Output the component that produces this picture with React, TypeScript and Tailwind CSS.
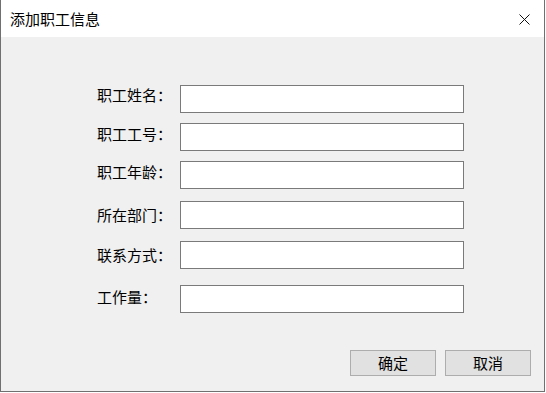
const font = { fontFamily: '"Noto Sans CJK SC", "Noto Sans", sans-serif' };

const fields = [
  { label: '职工姓名：', labelTop: 'mt-0', gap: 'mt-0' },
  { label: '职工工号：', labelTop: 'mt-[1px]', gap: 'mt-[10px]' },
  { label: '职工年龄：', labelTop: 'mt-[1px]', gap: 'mt-[10px]' },
  { label: '所在部门：', labelTop: 'mt-[4px]', gap: 'mt-[12px]' },
  { label: '联系方式：', labelTop: 'mt-[4px]', gap: 'mt-[12px]' },
  { label: '工作量：', labelTop: 'mt-[2px]', gap: 'mt-[16px]' },
];

export default function App() {
  return (
    <div className="w-[546px] h-[393px] bg-white" style={font}>
      <div className="w-[545px] h-[392px] flex flex-col border-l border-r border-b border-[#707070] bg-[#f0f0f0]">
        {/* Title bar */}
        <div className="h-[37px] bg-white flex items-center justify-between pl-[9px] pr-[14px]">
          <span className="text-[15px] leading-5 text-black">添加职工信息</span>
          <svg width="11" height="11" viewBox="0 0 11 11" className="mt-[1px]">
            <path d="M0.5 0.5 L10.5 10.5 M10.5 0.5 L0.5 10.5" stroke="#111" strokeWidth="1" />
          </svg>
        </div>

        {/* Form */}
        <div className="flex-1 flex flex-col pt-[48px] pl-[96px] pb-[15px] pr-[13px]">
          {fields.map((f, i) => (
            <div key={i} className={`flex items-start ${f.gap}`}>
              <label className={`w-[83px] text-[15px] leading-5 text-black ${f.labelTop}`}>{f.label}</label>
              <input
                type="text"
                className="w-[284px] h-[28px] bg-white border border-[#7a7a7a] outline-none px-1 text-[14px]"
              />
            </div>
          ))}

          <div className="mt-auto flex justify-end gap-[9px]">
            <button className="w-[86px] h-[26px] bg-[#e1e1e1] border border-[#adadad] text-[15px] leading-5 text-black">
              确定
            </button>
            <button className="w-[86px] h-[26px] bg-[#e1e1e1] border border-[#adadad] text-[15px] leading-5 text-black">
              取消
            </button>
          </div>
        </div>
      </div>
    </div>
  );
}
